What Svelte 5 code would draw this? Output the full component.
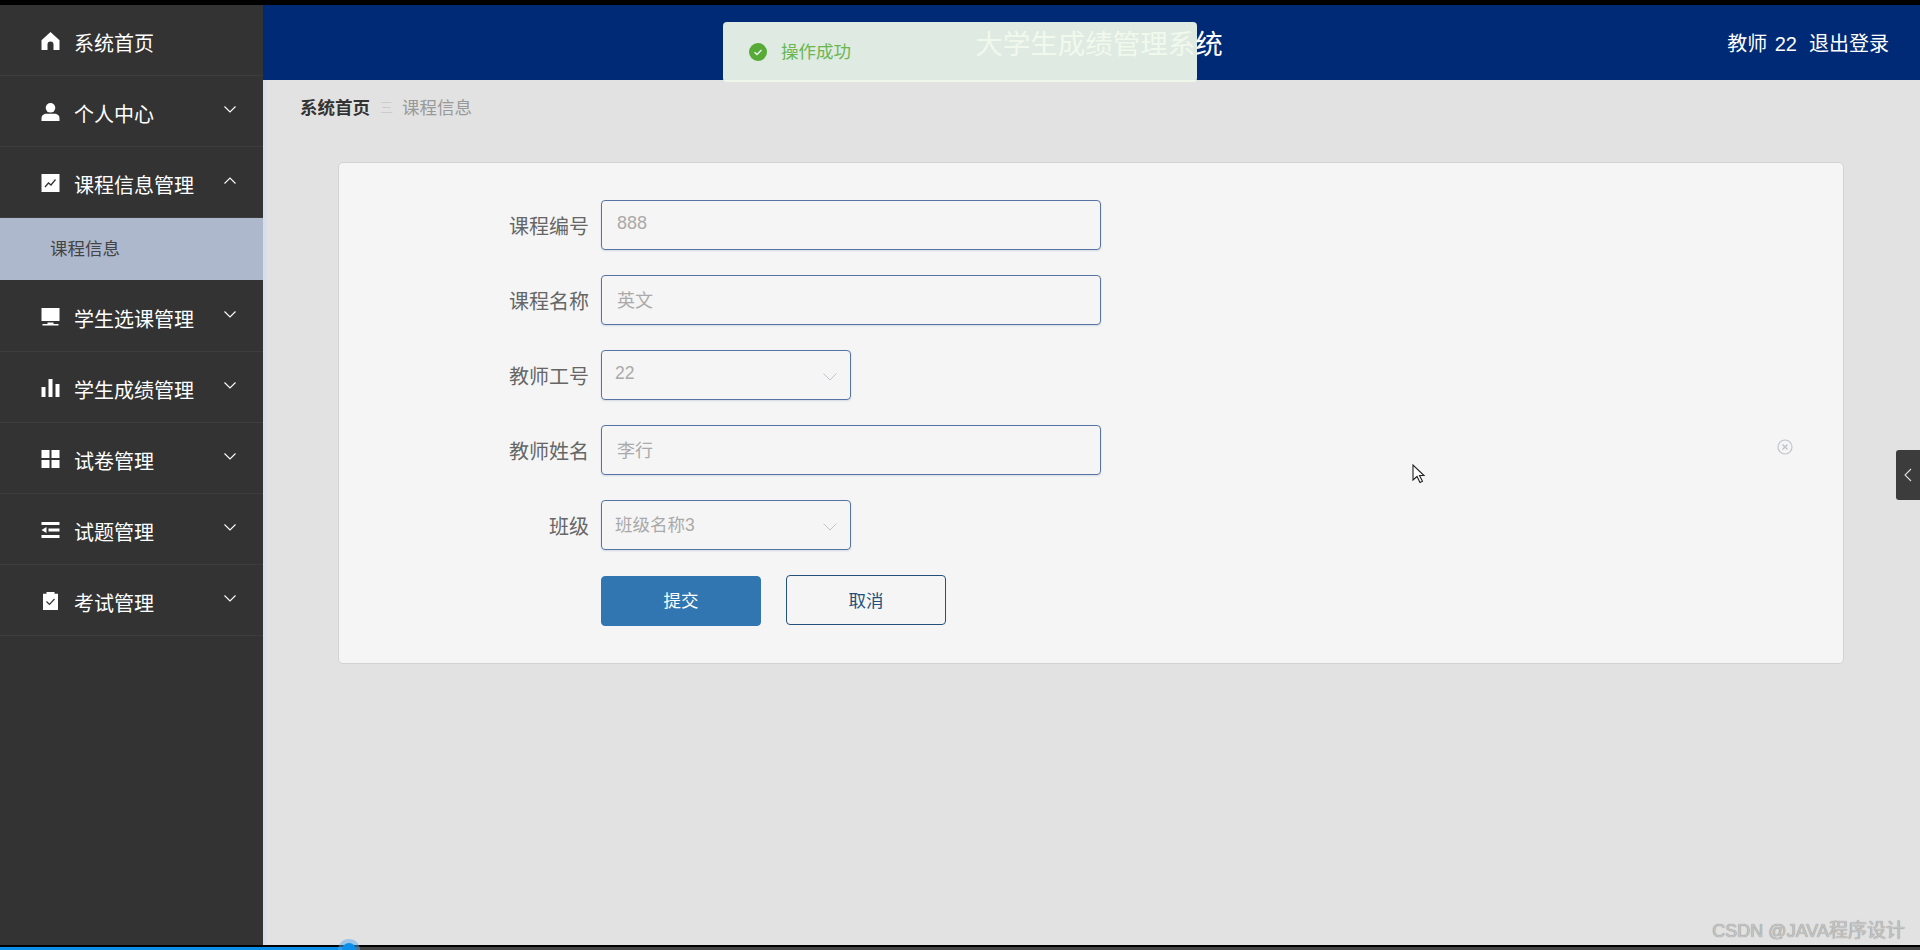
<script>
	const menus = [
		{ name: '系统首页', icon: 'home', arrow: '' },
		{ name: '个人中心', icon: 'user', arrow: 'down' },
		{ name: '课程信息管理', icon: 'chart', arrow: 'up', children: ['课程信息'] },
		{ name: '学生选课管理', icon: 'monitor', arrow: 'down' },
		{ name: '学生成绩管理', icon: 'bars', arrow: 'down' },
		{ name: '试卷管理', icon: 'grid', arrow: 'down' },
		{ name: '试题管理', icon: 'fold', arrow: 'down' },
		{ name: '考试管理', icon: 'check', arrow: 'down' }
	];

	const fields = [
		{ label: '课程编号', value: '888' },
		{ label: '课程名称', value: '英文' },
		{ label: '教师工号', value: '22', select: true },
		{ label: '教师姓名', value: '李行' },
		{ label: '班级', value: '班级名称3', select: true }
	];
</script>

<div class="page">
	<div class="top-edge"></div>
	<div class="body">
		<aside class="sidebar">
			{#each menus as menu}
				<div class="menu-item">
					<svg class="menu-icon" viewBox="0 0 18 18" fill="#fff">
						{#if menu.icon === 'home'}
							<path d="M9 0 18 8.200V18h-6v-5.500a3 3 0 0 0-6 0V18H0V8.200z" />
						{:else if menu.icon === 'user'}
							<circle cx="9" cy="4.800" r="4.800" />
							<path d="M0 18v-2.600C0 12.400 2.400 10.800 5 10.800h8c2.600 0 5 1.600 5 4.600V18z" />
						{:else if menu.icon === 'chart'}
							<rect width="18" height="18" />
							<path d="M3.500 13 7 9l2.500 2L14 5.500" fill="none" stroke="#333" stroke-width="1.300" />
						{:else if menu.icon === 'monitor'}
							<path d="M0 0h18v13H0zM6 14.500h6V16H6zM1 16h16v1.500H1z" />
						{:else if menu.icon === 'bars'}
							<path d="M0 8h4v10H0zM7 0h4v18H7zM14 5h4v13h-4z" />
						{:else if menu.icon === 'grid'}
							<path d="M0 0h8v8H0zM10 0h8v8h-8zM0 10h8v8H0zM10 10h8v8h-8z" />
						{:else if menu.icon === 'fold'}
							<path d="M0 1h18v3H0zM7 7.500h11v3H7zM0 14h18v3H0zM0 9l5-3v6z" />
						{:else}
							<path d="M1.500 2H5V0h8v2h3.500v18h-15z" transform="scale(1 .9)" />
							<path d="m5 9.500 3 3 5-5.500" fill="none" stroke="#333" stroke-width="1.200" />
						{/if}
					</svg>
					<span class="menu-name">{menu.name}</span>
					{#if menu.arrow}
						<svg class="chevron" class:up={menu.arrow === 'up'} viewBox="0 0 12 7" fill="none" stroke="#fff" stroke-width="1.100">
							<path d="M.5.500 6 6l5.500-5.500" />
						</svg>
					{/if}
				</div>
				{#if menu.children}
					{#each menu.children as child}
						<div class="sub-item">{child}</div>
					{/each}
				{/if}
			{/each}
		</aside>

		<div class="content">
			<header class="header">
				<div class="title">大学生成绩管理系统</div>
				<div class="user">
					<span class="who">教师 22</span>
					<span>退出登录</span>
				</div>
			</header>

			<main class="main">
				<div class="breadcrumb">
					<b>系统首页</b>
					<span class="sep">三</span>
					<span>课程信息</span>
				</div>

				<section class="card">
					{#each fields as field}
						<div class="row">
							<div class="label">{field.label}</div>
							<div class="control" class:select={field.select}>
								<span>{field.value}</span>
								{#if field.select}
									<svg class="select-arrow" viewBox="0 0 14 8" fill="none" stroke="#c0c4cc" stroke-width="1">
										<path d="M.5.500 7 7l6.500-6.500" />
									</svg>
								{/if}
							</div>
						</div>
					{/each}
					<div class="row actions">
						<button class="submit">提交</button>
						<button class="cancel">取消</button>
					</div>

					<svg class="clear" viewBox="0 0 16 16" fill="none" stroke="#c0c4cc">
						<circle cx="8" cy="8" r="7" stroke-width="1.200" />
						<path d="m5.500 5.500 5 5m0-5-5 5" stroke-width="1.500" />
					</svg>
				</section>
			</main>
		</div>
	</div>
	<div class="video-bar">
		<div class="played"></div>
		<div class="thumb"></div>
	</div>

	<div class="toast">
		<svg viewBox="0 0 18 18" width="18" height="18">
			<circle cx="9" cy="9" r="9" fill="#5cb531" />
			<path d="m5.500 9.200 2.500 2.300 4.500-4.500" fill="none" stroke="#fff" stroke-width="1.500" />
		</svg>
		<span class="toast-text">操作成功</span>
	</div>

	<div class="side-tab">
		<svg viewBox="0 0 8 14" width="8" height="14" fill="none" stroke="#ddd" stroke-width="1.100">
			<path d="M7 1 1 7l6 6" />
		</svg>
	</div>

	<svg class="cursor" viewBox="0 0 14 20" width="14" height="20">
		<path d="M1 1v15l4-3.500 3 6 2.500-1.200-3-5.800H12z" fill="#fff" stroke="#222" stroke-width="1.100" />
	</svg>

	<div class="watermark">CSDN @JAVA<span class="mark-cjk">程序设计</span></div>
</div>

<style>
	:global(body) {
		background: #000;
	}

	.page {
		position: relative;
		display: flex;
		flex-direction: column;
		height: 950px;
		overflow: hidden;
		background: #000;
		font-family: "Liberation Sans", "Noto Sans CJK SC", sans-serif;
	}

	.top-edge {
		height: 5px;
		flex-shrink: 0;
	}

	.body {
		display: flex;
		height: 940px;
	}

	.sidebar {
		width: 263px;
		flex-shrink: 0;
		background: #333;
	}

	.menu-item {
		display: flex;
		align-items: center;
		height: 68px;
		padding: 2px 41px 0;
		border-bottom: 1px solid #3d3d3d;
		color: #fff;
		font-size: 20px;
		position: relative;
	}

	.menu-icon {
		width: 19px;
		height: 18px;
		margin-right: 14px;
		flex-shrink: 0;
	}

	.menu-name {
		padding-top: 2px;
	}

	.chevron {
		position: absolute;
		right: 27px;
		top: 30px;
		width: 12px;
		height: 7px;
	}

	.chevron.up {
		transform: rotate(180deg);
	}

	.sub-item {
		display: flex;
		align-items: center;
		height: 61px;
		margin: -1px 0 1px;
		padding: 0 0 2px 50px;
		background: #adb8cc;
		color: #444;
		font-size: 17.500px;
	}

	.content {
		flex: 1;
		display: flex;
		flex-direction: column;
	}

	.header {
		display: flex;
		align-items: center;
		height: 75px;
		flex-shrink: 0;
		padding: 0 31px 0 208px;
		background: #002a76;
		color: #fff;
	}

	.title {
		flex: 1;
		text-align: center;
		font-size: 27.500px;
		padding-bottom: 2px;
	}

	.user {
		display: flex;
		gap: 12px;
		font-size: 20px;
	}

	.who {
		word-spacing: 2px;
	}

	.main {
		flex: 1;
		padding: 0 76px 0 37px;
		background: #e2e2e2;
		box-shadow: inset 5px 0 4px -2px #d6dde7;
	}

	.breadcrumb {
		display: flex;
		align-items: center;
		height: 52px;
		color: #999;
		font-size: 17.500px;
	}

	.breadcrumb b {
		color: #333;
	}

	.sep {
		margin: 0 9px 0 10px;
		color: #ccc;
		font-size: 13px;
	}

	.card {
		position: relative;
		display: flex;
		flex-direction: column;
		gap: 25px;
		height: 502px;
		box-sizing: border-box;
		margin: 30px 0 0 38px;
		padding-top: 37px;
		background: #f5f5f5;
		border: 1px solid #d2d2d2;
		border-radius: 5px;
	}

	.row {
		display: flex;
		align-items: center;
		height: 50px;
	}

	.label {
		width: 250px;
		margin-right: 12px;
		text-align: right;
		color: #666;
		font-size: 20px;
	}

	.control {
		display: flex;
		align-items: center;
		justify-content: space-between;
		width: 500px;
		height: 50px;
		box-sizing: border-box;
		padding: 0 15px 3px;
		border: 1px solid #5573a3;
		border-radius: 4px;
		color: #aaa;
		font-size: 18px;
		box-shadow: 0 1px 2px rgba(80, 110, 160, 0.2);
	}

	.control.select {
		width: 250px;
		padding: 0 13px 3px;
		font-size: 17.500px;
	}

	.select-arrow {
		width: 14px;
		height: 8px;
		margin-top: 7px;
	}

	.actions {
		gap: 25px;
		padding-left: 262px;
	}

	.actions button {
		width: 160px;
		height: 50px;
		padding: 0 0 2px;
		border-radius: 4px;
		font-family: inherit;
		font-size: 17.500px;
	}

	.submit {
		margin-top: 1px;
		background: #3276b1;
		border: 1px solid #3276b1;
		color: #fff;
	}

	.cancel {
		background: transparent;
		border: 1px solid #24507c;
		color: #24507c;
	}

	.clear {
		position: absolute;
		left: 1438px;
		top: 276px;
		width: 16px;
		height: 16px;
	}

	.video-bar {
		position: relative;
		height: 5px;
		flex-shrink: 0;
		background: linear-gradient(#000 2px, #444 2px);
	}

	.played {
		position: absolute;
		left: 0;
		bottom: 0;
		width: 348px;
		height: 3px;
		background: #0a8fea;
	}

	.thumb {
		position: absolute;
		left: 342px;
		top: -2px;
		width: 14px;
		height: 14px;
		border-radius: 50%;
		background: #0a8fea;
		box-shadow: 0 0 0 4px rgba(90, 170, 235, 0.5);
	}

	.toast {
		position: absolute;
		left: 723px;
		top: 22px;
		display: flex;
		align-items: center;
		gap: 14px;
		width: 474px;
		height: 60px;
		box-sizing: border-box;
		padding-left: 26px;
		background: #f0f9eb;
		border-radius: 4px;
		color: #72c24e;
		font-size: 17.500px;
		opacity: 0.93;
	}

	.toast-text {
		padding-bottom: 3px;
	}

	.side-tab {
		position: absolute;
		left: 1896px;
		top: 450px;
		display: flex;
		align-items: center;
		justify-content: center;
		width: 24px;
		height: 50px;
		background: #3c3c3c;
		border-radius: 3px 0 0 3px;
	}

	.cursor {
		position: absolute;
		left: 1412px;
		top: 464px;
	}

	.watermark {
		position: absolute;
		right: 15px;
		top: 919px;
		color: #c4c4c4;
		font-size: 18px;
		line-height: 24px;
		text-shadow: 0 0 1px #777;
	}

	.mark-cjk {
		font-size: 19px;
	}
</style>
